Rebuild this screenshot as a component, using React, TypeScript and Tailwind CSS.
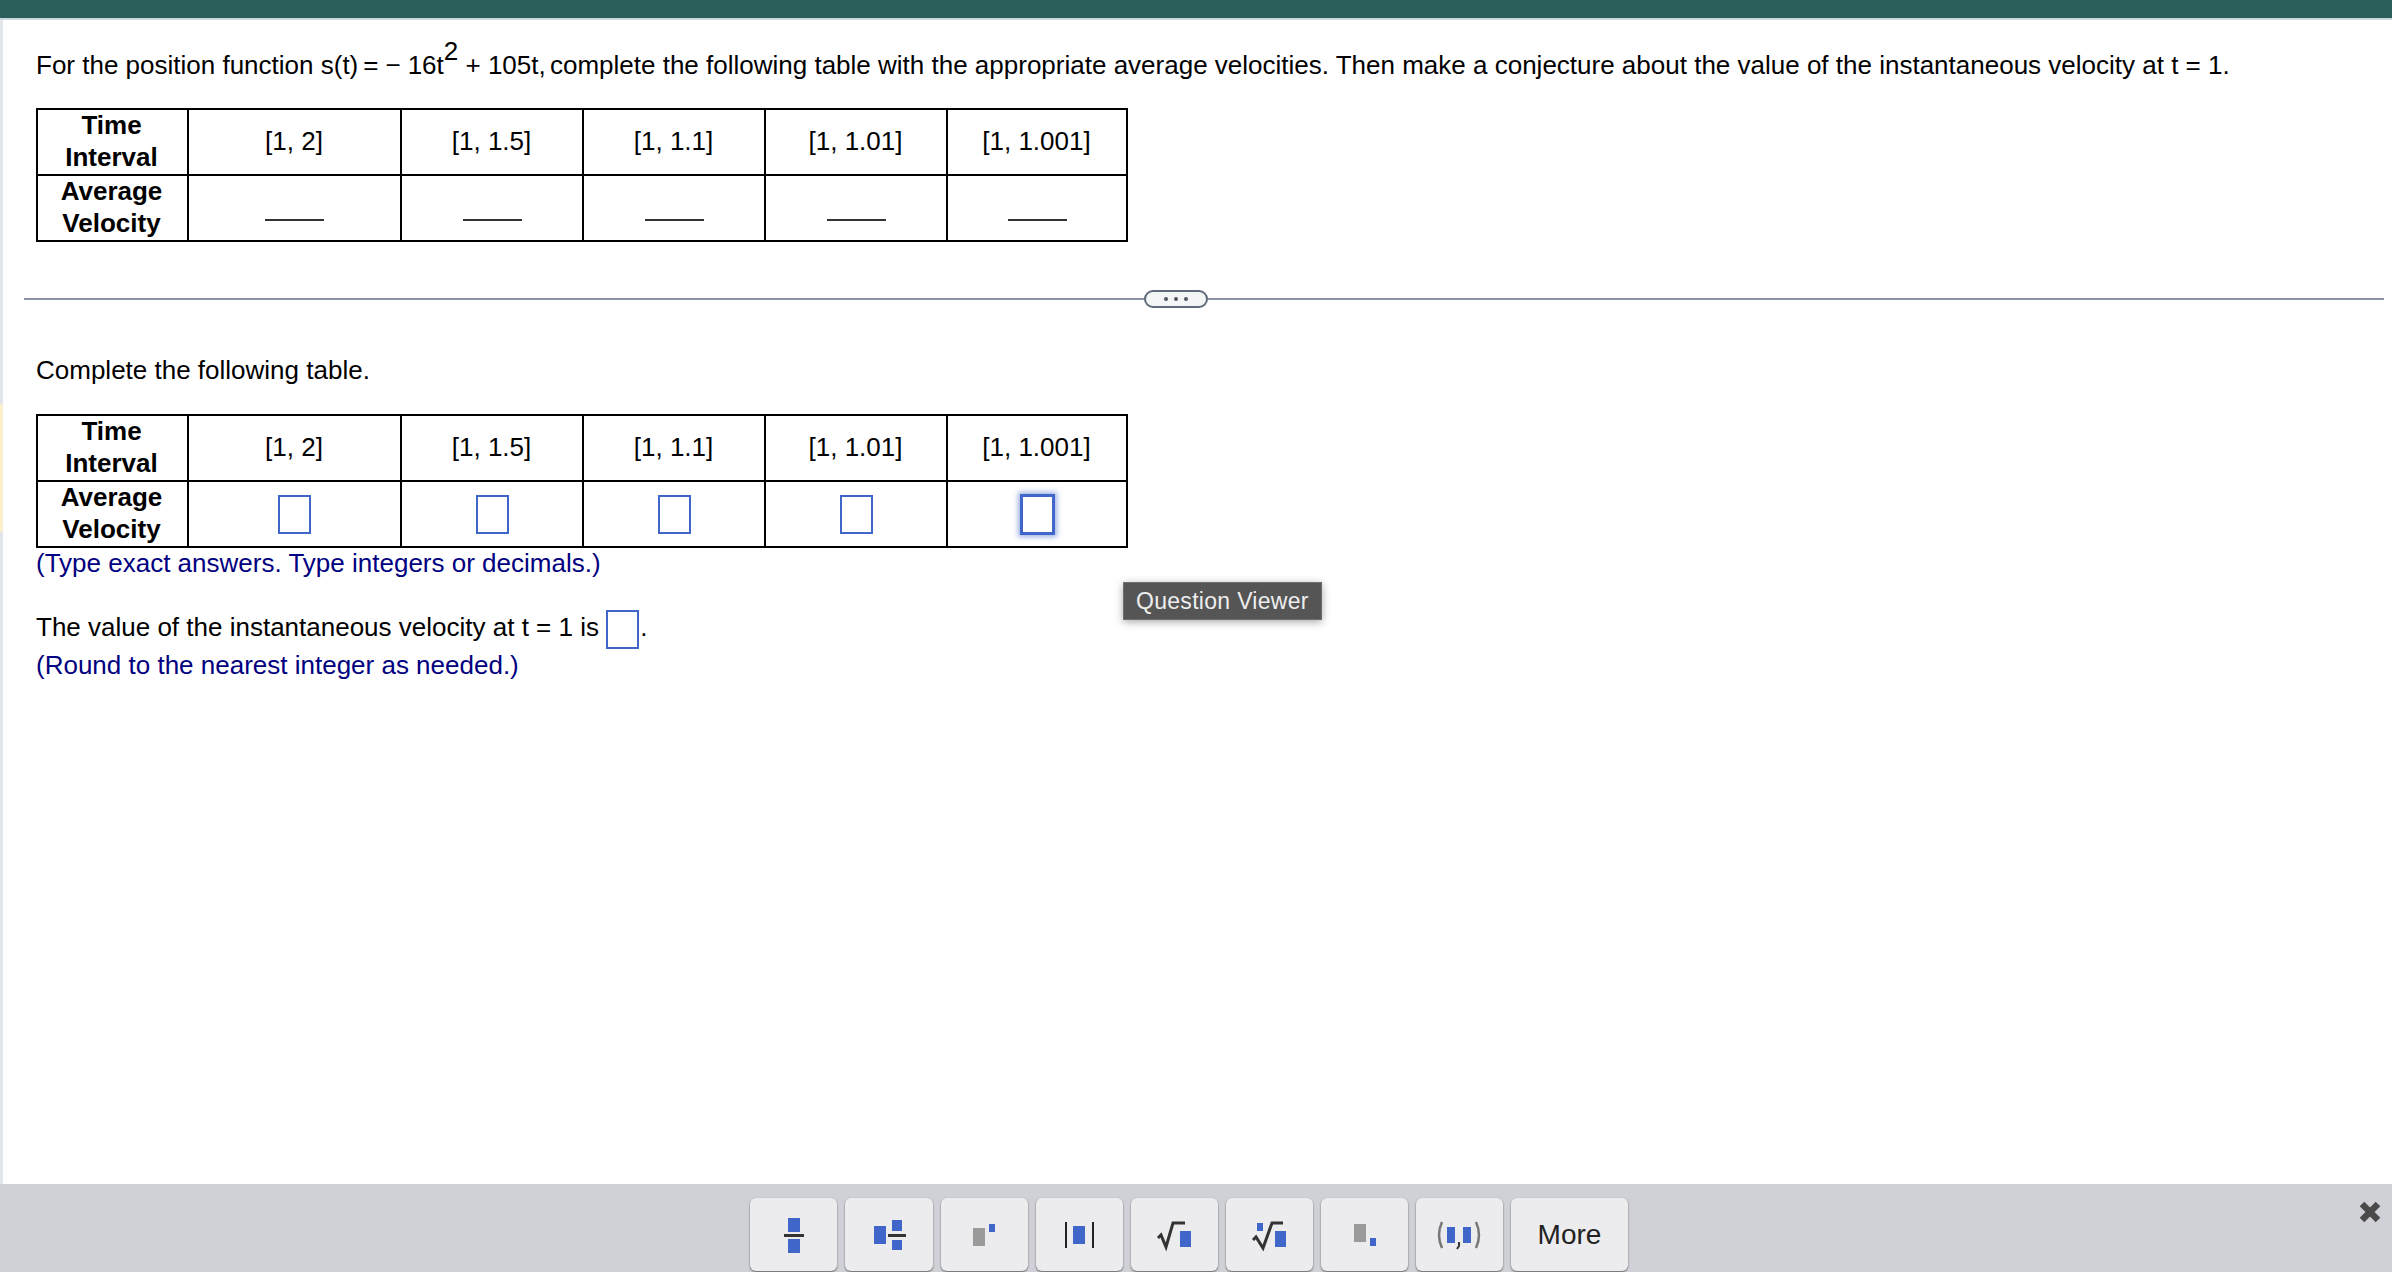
import React from 'react'

const ranges = ['[1, 2]', '[1, 1.5]', '[1, 1.1]', '[1, 1.01]', '[1, 1.001]']

const Cols = () => (
  <colgroup>
    <col className='w-[151px]' />
    <col className='w-[213px]' />
    <col className='w-[182px]' />
    <col className='w-[182px]' />
    <col className='w-[182px]' />
    <col className='w-[180px]' />
  </colgroup>
)

const HeadCell = ({ a, b }: { a: string; b: string }) => (
  <th className='border-2 border-black p-0 pr-[2px] font-bold text-center leading-[32px]'>
    <div className='-mt-[2px]'>
      {a}
      <br />
      {b}
    </div>
  </th>
)

const AnswerBox = ({ focused }: { focused?: boolean }) => (
  <span
    className={
      focused
        ? 'inline-block align-middle w-[35px] h-[41px] border-[3px] border-[#3f66c8] bg-white shadow-[0_0_5px_2px_rgba(63,102,200,0.5)]'
        : 'inline-block align-middle w-[33px] h-[39px] border-2 border-[#3f66c8] bg-white'
    }
  />
)

const TimeTable = ({ answers }: { answers: boolean }) => (
  <table className='table-fixed border-collapse w-[1092px] text-[26px] text-black'>
    <Cols />
    <tbody>
      <tr className='h-[66px]'>
        <HeadCell a='Time' b='Interval' />
        {ranges.map((r) => (
          <td key={r} className='border-2 border-black p-0 pb-[2px] pr-[1px] text-center'>
            {r}
          </td>
        ))}
      </tr>
      <tr className='h-[66px]'>
        <HeadCell a='Average' b='Velocity' />
        {ranges.map((r, i) => (
          <td key={r} className='border-2 border-black p-0 text-center'>
            {answers ? (
              <AnswerBox focused={i === 4} />
            ) : (
              <span className='block mx-auto mt-[24px] w-[59px] h-[2px] bg-[#333]' />
            )}
          </td>
        ))}
      </tr>
    </tbody>
  </table>
)

const ToolBtn = ({ w, children }: { w: string; children: React.ReactNode }) => (
  <button className={`${w} h-[73px] rounded-md bg-[#ececee] shadow-[0_1px_2px_rgba(0,0,0,0.55)] flex items-center justify-center shrink-0`}>
    {children}
  </button>
)

const Icon = ({ children }: { children: React.ReactNode }) => (
  <svg width='87' height='73' viewBox='0 0 87 73'>
    {children}
  </svg>
)

const blue = '#3f66c8'
const gray = '#9a9a9a'

export default function App() {
  return (
    <div className="h-screen flex flex-col overflow-hidden bg-white font-['Liberation_Sans',Arial,sans-serif] text-black">
      <div className='h-[20px] shrink-0 bg-[#2a5e5a] border-b-2 border-[#cdd5dd]' />

      <main className='relative flex-1 border-l-[3px] border-[#e2e5ea]'>
        <div className='pl-[33px] pt-[30px]'>
          <p className='text-[26px] leading-[30px] whitespace-nowrap'>
            For the position function s(t)<span className='ml-[5px] mr-[7px]'>=</span>−<span className='ml-[7px]'>16t</span>
            <sup className='text-[26px] leading-[0] relative -top-[14px] align-baseline'>2</sup> + <span className='-mr-[3px]'>105t,</span> complete the following table with the appropriate average velocities. Then make a conjecture about the value of the instantaneous velocity at t = 1.
          </p>
          <div className='mt-[28px]'>
            <TimeTable answers={false} />
          </div>
        </div>

        {/* divider with the little pill */}
        <div className='relative mt-[56px] ml-[21px] mr-[8px] h-[2px] bg-[#8a92a3]'>
          <div className='absolute left-[1120px] -top-[8px] w-[64px] h-[18px] rounded-full border-2 border-[#5f6b7a] bg-[#f3f5f7] flex items-center justify-center gap-[6px]'>
            <span className='w-[4px] h-[4px] rounded-full bg-[#4d5764]' />
            <span className='w-[4px] h-[4px] rounded-full bg-[#4d5764]' />
            <span className='w-[4px] h-[4px] rounded-full bg-[#4d5764]' />
          </div>
        </div>

        <div className='relative pl-[33px] pt-[55px]'>
          <p className='text-[26px] leading-[30px]'>Complete the following table.</p>
          <div className='relative mt-[29px]'>
            <div className='absolute -left-[33px] -top-[10px] w-[3px] h-[128px] -ml-[3px] bg-[#fbeecb]' />
            <TimeTable answers={true} />
          </div>
          <p className='text-[26px] leading-[30px] text-[#000080]'>(Type exact answers. Type integers or decimals.)</p>
          <p className='mt-[30px] text-[26px] leading-[39px] whitespace-nowrap'>
            The value of the instantaneous velocity at t = 1 is <AnswerBox />
            <span className='ml-[1px]'>.</span>
          </p>
          <p className='mt-[1px] text-[26px] leading-[30px] text-[#000080]'>(Round to the nearest integer as needed.)</p>
        </div>

        <div className='absolute left-[1120px] top-[562px] h-[38px] px-[12px] flex items-center bg-[#555] border border-[#6e6e6e] text-[#eee] text-[23px] tracking-[0.3px] shadow-[0_2px_8px_rgba(0,0,0,0.35)] whitespace-nowrap'>
          Question Viewer
        </div>
      </main>

      <div className='h-[88px] shrink-0 bg-[#d0d1d6] flex pl-[750px] pt-[14px] gap-[8px] relative'>
        <ToolBtn w='w-[87px]'>
          <Icon>
            <rect x='38' y='20' width='12' height='14' fill={blue} />
            <rect x='34' y='36' width='20' height='3' fill='#333' />
            <rect x='38' y='41' width='12' height='14' fill={blue} />
          </Icon>
        </ToolBtn>
        <ToolBtn w='w-[88px]'>
          <Icon>
            <rect x='28' y='28' width='12' height='18' fill={blue} />
            <rect x='46' y='22' width='10' height='11' fill={blue} />
            <rect x='42' y='36' width='18' height='3' fill='#333' />
            <rect x='46' y='42' width='10' height='10' fill={blue} />
          </Icon>
        </ToolBtn>
        <ToolBtn w='w-[87px]'>
          <Icon>
            <rect x='32' y='30' width='12' height='18' fill={gray} />
            <rect x='48' y='26' width='6' height='8' fill={blue} />
          </Icon>
        </ToolBtn>
        <ToolBtn w='w-[87px]'>
          <Icon>
            <rect x='29' y='24' width='2' height='26' fill='#222' />
            <rect x='37' y='28' width='12' height='18' fill={blue} />
            <rect x='56' y='24' width='2' height='26' fill='#222' />
          </Icon>
        </ToolBtn>
        <ToolBtn w='w-[87px]'>
          <Icon>
            <path d='M27 40 L30 37 L35 49 L42 25 L54 25' fill='none' stroke='#333' strokeWidth='3' />
            <rect x='49' y='33' width='11' height='16' fill={blue} />
          </Icon>
        </ToolBtn>
        <ToolBtn w='w-[87px]'>
          <Icon>
            <rect x='31' y='25' width='6' height='8' fill={blue} />
            <path d='M27 42 L30 39 L37 50 L46 25 L57 25' fill='none' stroke='#333' strokeWidth='3' />
            <rect x='49' y='33' width='11' height='16' fill={blue} />
          </Icon>
        </ToolBtn>
        <ToolBtn w='w-[87px]'>
          <Icon>
            <rect x='33' y='26' width='12' height='18' fill={gray} />
            <rect x='49' y='40' width='6' height='8' fill={blue} />
          </Icon>
        </ToolBtn>
        <ToolBtn w='w-[87px]'>
          <Icon>
            <path d='M26 24 Q20 37 26 50' fill='none' stroke='#777' strokeWidth='2.5' />
            <rect x='31' y='29' width='8' height='16' fill={blue} />
            <path d='M43 44 L43 48 L41 51' fill='none' stroke='#333' strokeWidth='2' />
            <rect x='47' y='29' width='8' height='16' fill={blue} />
            <path d='M60 24 Q66 37 60 50' fill='none' stroke='#777' strokeWidth='2.5' />
          </Icon>
        </ToolBtn>
        <ToolBtn w='w-[117px]'>
          <span className='text-[28px] text-[#222]'>More</span>
        </ToolBtn>

        <svg className='absolute left-[2358px] top-[17px]' width='24' height='22' viewBox='0 0 24 22'>
          <path d='M4 3 L20 19 M20 3 L4 19' stroke='#4a4a4a' strokeWidth='6.5' />
        </svg>
      </div>
    </div>
  )
}
